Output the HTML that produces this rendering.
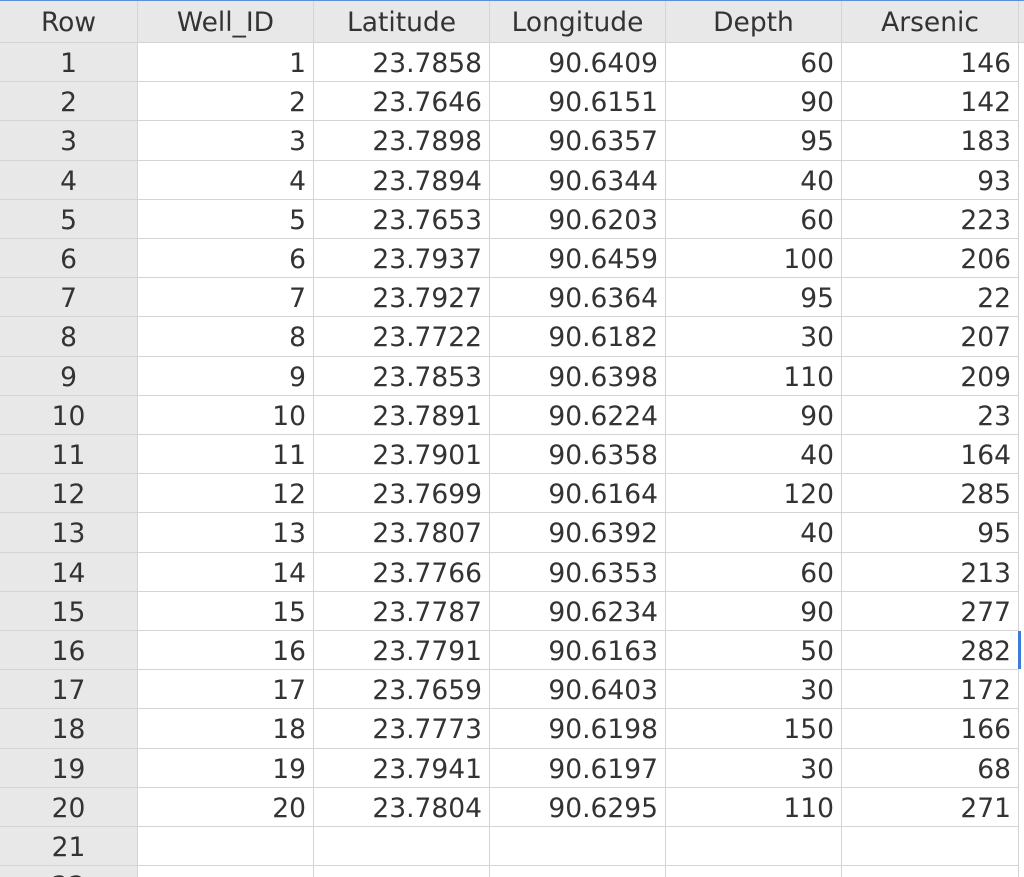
<!DOCTYPE html>
<html><head><style>
html,body{margin:0;padding:0;background:#fff;width:1024px;height:877px;overflow:hidden;}
body{font-family:"DejaVu Sans","Liberation Sans",sans-serif;font-size:26.5px;color:#333;position:relative;}
.top{position:absolute;left:0;top:0;width:1024px;height:2px;background:#5b8fd9;}
.r{position:absolute;left:0;width:1024px;height:40px;}
.c{position:absolute;top:0;height:40px;line-height:41px;text-align:right;border-right:1px solid #d4d4d4;border-bottom:1px solid #d4d4d4;box-sizing:border-box;padding-right:7px;}
.c0{left:0;width:138px;background:#e8e8e8;text-align:center;padding:0;}
.c1{left:138px;width:176px}.c2{left:314px;width:176px}.c3{left:490px;width:176px}
.c4{left:666px;width:176px}.c5{left:842px;width:177px}
.h .c{background:#e8e8e8;text-align:center;padding:0;height:42px;line-height:44px;}
.h{height:42px;top:1px;}
</style></head><body>
<div class="top"></div>
<div class="r h"><div class="c c0">Row</div><div class="c c1">Well_ID</div><div class="c c2">Latitude</div><div class="c c3">Longitude</div><div class="c c4">Depth</div><div class="c c5">Arsenic</div><div class="c" style="left:1019px;width:10px"></div></div>
<div id="rows"></div>
<script>
var d=[[23.7858,90.6409,60,146],[23.7646,90.6151,90,142],[23.7898,90.6357,95,183],[23.7894,90.6344,40,93],[23.7653,90.6203,60,223],[23.7937,90.6459,100,206],[23.7927,90.6364,95,22],[23.7722,90.6182,30,207],[23.7853,90.6398,110,209],[23.7891,90.6224,90,23],[23.7901,90.6358,40,164],[23.7699,90.6164,120,285],[23.7807,90.6392,40,95],[23.7766,90.6353,60,213],[23.7787,90.6234,90,277],[23.7791,90.6163,50,282],[23.7659,90.6403,30,172],[23.7773,90.6198,150,166],[23.7941,90.6197,30,68],[23.7804,90.6295,110,271]];
var h='';
for(var i=0;i<22;i++){var t=Math.round(43+i*39.2);var t2=Math.round(43+(i+1)*39.2);var hh=t2-t;var r=d[i];
var st=' style="height:'+hh+'px"';
h+='<div class="r" style="top:'+t+'px;height:'+hh+'px"><div class="c c0"'+st+'>'+(i+1)+'</div>';
if(r){h+='<div class="c c1"'+st+'>'+(i+1)+'</div><div class="c c2"'+st+'>'+r[0].toFixed(4)+'</div><div class="c c3"'+st+'>'+r[1].toFixed(4)+'</div><div class="c c4"'+st+'>'+r[2]+'</div><div class="c c5"'+st+'>'+r[3]+'</div>';}
else{h+='<div class="c c1"'+st+'></div><div class="c c2"'+st+'></div><div class="c c3"'+st+'></div><div class="c c4"'+st+'></div><div class="c c5"'+st+'></div>';}
if(i==15)h+='<div style="position:absolute;left:1018px;top:0;width:3px;height:'+(hh-1)+'px;background:#3d7be0"></div>';
h+='</div>';}
document.getElementById('rows').innerHTML=h;
</script>
</body></html>
